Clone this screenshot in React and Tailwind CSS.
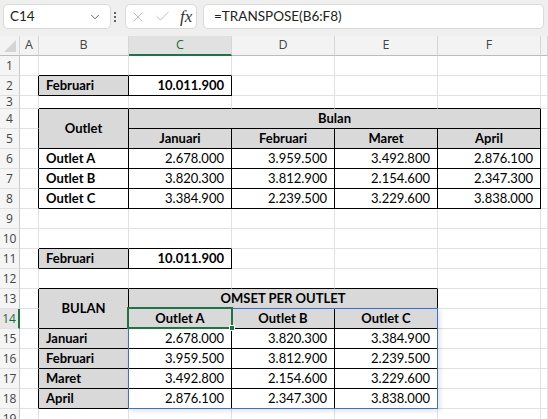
import React from 'react';
import { ChevronDown, X, Check } from 'lucide-react';

const COLS = ['A', 'B', 'C', 'D', 'E', 'F', 'G'];
const ROW_COUNT = 19;

// tables as [rowStart, colStart, rowEnd, colEnd], A = 1
const TABLES = [
  [2, 2, 2, 3],
  [4, 2, 8, 6],
  [11, 2, 11, 3],
  [13, 2, 18, 5],
];

const inTable = (r, c) =>
  TABLES.some(([r1, c1, r2, c2]) => r >= r1 && r <= r2 && c >= c1 && c <= c2);

const COVERED = ['B5', 'D4', 'E4', 'F4', 'B14', 'D13', 'E13'];

const CELLS = {
  B2: { v: 'Februari', b: true, a: 'l', g: true },
  C2: { v: '10.011.900', b: true, a: 'r' },
  B4: { v: 'Outlet', b: true, a: 'c', g: true, span: 'row-span-2' },
  C4: { v: 'Bulan', b: true, a: 'c', g: true, span: 'col-span-4', cs: 4 },
  C5: { v: 'Januari', b: true, a: 'c', g: true },
  D5: { v: 'Februari', b: true, a: 'c', g: true },
  E5: { v: 'Maret', b: true, a: 'c', g: true },
  F5: { v: 'April', b: true, a: 'c', g: true },
  B11: { v: 'Februari', b: true, a: 'l', g: true },
  C11: { v: '10.011.900', b: true, a: 'r' },
  B13: { v: 'BULAN', b: true, a: 'c', g: true, span: 'row-span-2' },
  C13: { v: 'OMSET PER OUTLET', b: true, a: 'c', g: true, span: 'col-span-3', cs: 3 },
  C14: { v: 'Outlet A', b: true, a: 'c', g: true },
  D14: { v: 'Outlet B', b: true, a: 'c', g: true },
  E14: { v: 'Outlet C', b: true, a: 'c', g: true },
};

const sales = [
  ['Outlet A', '2.678.000', '3.959.500', '3.492.800', '2.876.100'],
  ['Outlet B', '3.820.300', '3.812.900', '2.154.600', '2.347.300'],
  ['Outlet C', '3.384.900', '2.239.500', '3.229.600', '3.838.000'],
];
const months = ['Januari', 'Februari', 'Maret', 'April'];

sales.forEach((row, i) => {
  const r = 6 + i;
  CELLS['B' + r] = { v: row[0], b: true, a: 'l' };
  row.slice(1).forEach((val, j) => {
    CELLS[COLS[2 + j] + r] = { v: val, a: 'r' };
  });
});

months.forEach((m, i) => {
  const r = 15 + i;
  CELLS['B' + r] = { v: m, b: true, a: 'l', g: true };
  sales.forEach((row, j) => {
    CELLS[COLS[2 + j] + r] = { v: row[1 + i], a: 'r' };
  });
});

const alignCls = { l: 'justify-start pl-[7px]', r: 'justify-end pr-[7px]', c: 'justify-center' };

const Cell = ({ r, c }) => {
  const key = COLS[c - 1] + r;
  const cell = CELLS[key];
  const cs = cell?.cs || 1;
  const rs = cell?.span === 'row-span-2' ? 2 : 1;
  const self = inTable(r, c);
  const rightBlack = self || inTable(r, c + cs);
  const bottomBlack = self || inTable(r + rs, c);

  return (
    <div
      className={`flex items-center overflow-hidden whitespace-nowrap border-r border-b pt-px text-[13px] text-black ${
        rightBlack ? 'border-r-black' : 'border-r-[#e1e1e1]'
      } ${bottomBlack ? 'border-b-black' : 'border-b-[#e1e1e1]'} ${
        cell?.g ? 'bg-[#d9d9d9]' : 'bg-white'
      } ${cell ? alignCls[cell.a] : ''} ${cell?.b ? 'font-bold' : ''} ${cell?.span || ''}`}
    >
      {cell?.v}
    </div>
  );
};

const RowHeader = ({ r }) => {
  const active = r === 14;
  return (
    <div
      className={`flex items-center justify-center overflow-hidden border-b border-b-[#e1e1e1] text-[12px] leading-none ${
        active
          ? 'bg-[#e6e6e6] border-r-2 border-r-[#217346] text-[#1b6a3f]'
          : 'bg-[#f5f5f5] border-r border-r-[#c8c8c8] text-[#444]'
      }`}
      style={{ fontFamily: '"Open Sans", sans-serif' }}
    >
      {r}
    </div>
  );
};

const ColHeader = ({ label }) => {
  const active = label === 'C';
  return (
    <div
      className={`flex items-center justify-center border-r border-r-[#d6d6d6] text-[12.5px] ${
        active
          ? 'bg-[#e1e1e1] border-b-2 border-b-[#217346] text-[#1b6a3f]'
          : 'bg-[#f3f3f3] border-b border-b-[#bdbdbd] text-[#444]'
      }`}
      style={{ fontFamily: '"Open Sans", sans-serif' }}
    >
      {label !== 'G' && label}
    </div>
  );
};

const Toolbar = () => (
  <div className="flex h-[36px] items-start bg-[#efefef] pt-[4px]">
    {/* Name box */}
    <div className="ml-[3px] flex h-[25px] w-[108px] items-center justify-between rounded-[5px] border border-[#dadada] bg-white pl-[6px] pr-[8px]">
      <span className="text-[13.5px] text-[#222]">C14</span>
      <ChevronDown size={14} strokeWidth={1.5} className="text-[#555]" />
    </div>

    {/* Divider dots */}
    <div className="ml-[2px] flex h-[25px] w-[3px] flex-col items-center justify-center gap-[2px]">
      <span className="h-[2px] w-[2px] rounded-full bg-[#333]" />
      <span className="h-[2px] w-[2px] rounded-full bg-[#333]" />
      <span className="h-[2px] w-[2px] rounded-full bg-[#333]" />
    </div>

    {/* Cancel / Enter / fx */}
    <div className="ml-[9px] flex h-[25px] w-[72px] items-center rounded-[5px] border border-[#dadada] bg-white pl-[4px]">
      <X size={16} strokeWidth={1.2} className="text-[#b3b3b3]" />
      <Check size={17} strokeWidth={1.2} className="ml-[8px] text-[#b3b3b3]" />
      <span
        className="ml-[9px] text-[17px] italic leading-none text-[#333]"
        style={{ fontFamily: '"Liberation Serif", serif' }}
      >
        fx
      </span>
    </div>

    {/* Formula input */}
    <div className="ml-[6px] mr-[4px] flex h-[25px] flex-1 items-center rounded-[5px] border border-[#dadada] bg-white pl-[10px]">
      <span className="text-[13.5px] text-[#222]">=TRANSPOSE(B6:F8)</span>
    </div>
  </div>
);

export default function App() {
  const rows = Array.from({ length: ROW_COUNT }, (_, i) => i + 1);

  return (
    <div
      className="h-[419px] w-[548px] overflow-hidden bg-white"
      style={{ fontFamily: 'Lato, "Liberation Sans", sans-serif' }}
    >
      <Toolbar />

      <div className="relative grid grid-cols-[20px_19px_90px_103px_103px_103px_103px_1fr] grid-rows-[20px_20px_20px_13px_repeat(16,20px)]">
        {/* corner */}
        <div className="relative border-r border-b border-r-[#d6d6d6] border-b-[#bdbdbd] bg-[#f3f3f3]">
          <svg width="12" height="12" className="absolute bottom-[3px] right-[3px]" viewBox="0 0 12 12">
            <polygon points="12,0 12,12 0,12" fill="#d4d4d4" />
          </svg>
        </div>
        {COLS.map((c) => (
          <ColHeader key={c} label={c} />
        ))}

        {rows.map((r) => (
          <React.Fragment key={r}>
            <RowHeader r={r} />
            {COLS.map((col, i) =>
              COVERED.includes(col + r) ? null : <Cell key={col + r} r={r} c={i + 1} />
            )}
          </React.Fragment>
        ))}

        {/* spill range */}
        <div className="pointer-events-none absolute left-[128px] top-[272px] h-[101px] w-[310px] border border-[#3c6fd1] shadow-[2px_2px_5px_rgba(0,0,0,0.12)]" />
        {/* active cell */}
        <div className="pointer-events-none absolute left-[127px] top-[271px] h-[22px] w-[106px] border-2 border-[#217346]" />
        {/* fill handle */}
        <div className="pointer-events-none absolute left-[229px] top-[289px] h-[6px] w-[6px] border border-white bg-[#217346]" />
      </div>
    </div>
  );
}
